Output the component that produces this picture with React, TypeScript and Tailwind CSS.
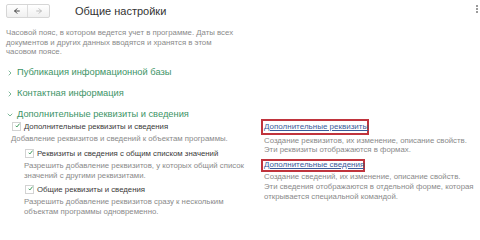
import { ArrowLeft, ArrowRight, ChevronRight, ChevronDown } from 'lucide-react';

function Check({ label }: { label: string }) {
  return (
    <div className="flex items-center gap-[3px] h-[12px]">
      <span className="flex h-[9px] w-[9px] items-center justify-center border border-[#d3d3d3] bg-white">
        <svg viewBox="0 0 12 12" className="h-[11px] w-[11px] -mt-[2px] ml-[2px]">
          <path d="M1.5 6.5 L4.5 9.5 L11 1.5" fill="none" stroke="#3f9a5c" strokeWidth="2.4" />
        </svg>
      </span>
      <span className="whitespace-nowrap text-[7.8px] text-[#3a3a3a]">{label}</span>
    </div>
  );
}

function Group({ title, open = false }: { title: string; open?: boolean }) {
  return (
    <div className="flex items-center gap-[3px] h-[21px] text-[#3d9467]">
      {open ? (
        <ChevronDown className="h-[8px] w-[8px]" strokeWidth={2} />
      ) : (
        <ChevronRight className="h-[8px] w-[8px]" strokeWidth={2} />
      )}
      <span className="whitespace-nowrap text-[9.3px]">{title}</span>
    </div>
  );
}

export default function App() {
  return (
    <div className="relative h-[218px] w-[480px] overflow-hidden bg-white font-['Liberation_Sans',Arial,sans-serif]">
      {/* header */}
      <div className="flex h-[14px] items-center pl-[6px] mt-[4px]">
        <div className="flex h-[14px] rounded-[2px] border border-[#d6d6d6] bg-gradient-to-b from-white to-[#f0f0f0]">
          <button className="flex w-[21px] items-center justify-center border-r border-[#dcdcdc]">
            <ArrowLeft className="h-[8px] w-[8px] text-[#444]" strokeWidth={3} />
          </button>
          <button className="flex w-[21px] items-center justify-center">
            <ArrowRight className="h-[8px] w-[8px] text-[#bdbdbd]" strokeWidth={3} />
          </button>
        </div>
        <h1 className="ml-[25px] whitespace-nowrap text-[11px] leading-[14px] text-[#333]">Общие настройки</h1>
      </div>
      <div className="absolute right-[2px] top-[5px] flex flex-col gap-[1px]">
        <span className="h-[2px] w-[2px] bg-[#9a9a9a]" />
        <span className="h-[2px] w-[2px] bg-[#9a9a9a]" />
        <span className="h-[2px] w-[2px] bg-[#9a9a9a]" />
      </div>

      {/* description */}
      <p className="mt-[10px] ml-[6px] whitespace-nowrap text-[7.8px] leading-[9.5px] text-[#8a8a8a]">
        Часовой пояс, в котором ведется учет в программе. Даты всех
        <br />
        документов и других данных вводятся и хранятся в этом
        <br />
        часовом поясе.
      </p>

      <div className="mt-[6px] pl-[6px]">
        <Group title="Публикация информационной базы" />
        <Group title="Контактная информация" />
        <div className="-mb-[5px]">
          <Group title="Дополнительные реквизиты и сведения" open />
        </div>
      </div>

      <div className="flex">
        <div className="w-[254px] shrink-0">
          <div className="pl-[12px]">
            <Check label="Дополнительные реквизиты и сведения" />
          </div>
          <p className="ml-[11px] mt-[1px] whitespace-nowrap text-[7.8px] leading-[10px] text-[#8a8a8a]">
            Добавление реквизитов и сведений к объектам программы.
          </p>
          <div className="mt-[4px] pl-[25px]">
            <Check label="Реквизиты и сведения с общим списком значений" />
            <p className="-ml-[1px] mt-[1px] whitespace-nowrap text-[7.8px] leading-[10px] text-[#8a8a8a]">
              Разрешить добавление реквизитов, у которых общий список
              <br />
              значений с другими реквизитами.
            </p>
            <div className="mt-[3px]">
              <Check label="Общие реквизиты и сведения" />
            </div>
            <p className="-ml-[1px] mt-[1px] whitespace-nowrap text-[7.8px] leading-[10px] text-[#8a8a8a]">
              Разрешить добавление реквизитов сразу к нескольким
              <br />
              объектам программы одновременно.
            </p>
          </div>
        </div>

        <div className="-mt-[2px] pl-[7px]">
          <div className="flex h-[16px] w-[108px] items-center border-2 border-[#c0343d] pl-[1px]">
            <a className="whitespace-nowrap text-[8px] text-[#3b5b9a] underline">Дополнительные реквизиты</a>
          </div>
          <p className="ml-[3px] mt-[1px] whitespace-nowrap text-[7.8px] leading-[9.5px] text-[#8a8a8a]">
            Создание реквизитов, их изменение, описание свойств.
            <br />
            Эти реквизиты отображаются в формах.
          </p>
          <div className="mt-[4px] flex h-[13px] w-[104px] items-center border-2 border-[#c0343d] pl-[1px]">
            <a className="whitespace-nowrap text-[8px] text-[#3b5b9a] underline">Дополнительные сведения</a>
          </div>
          <p className="ml-[3px] whitespace-nowrap text-[7.8px] leading-[10px] text-[#8a8a8a]">
            Создание сведений, их изменение, описание свойств.
            <br />
            Эти сведения отображаются в отдельной форме, которая
            <br />
            открывается специальной командой.
          </p>
        </div>
      </div>
    </div>
  );
}
